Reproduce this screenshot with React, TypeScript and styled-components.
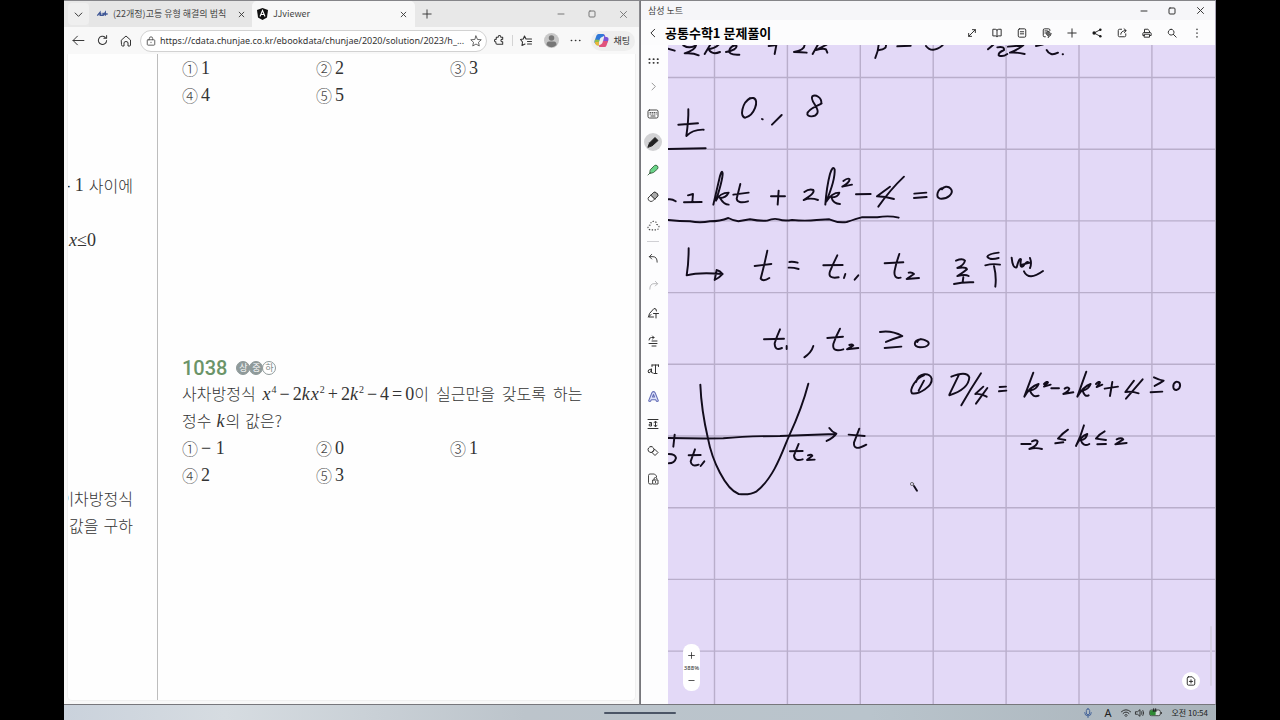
import React from 'react';
import styled, { createGlobalStyle } from 'styled-components';

const UI = `"Noto Sans", "Noto Sans CJK KR", sans-serif`;
const KR = `"Noto Sans CJK KR", sans-serif`;
const BOOK = `"Liberation Serif", "Noto Sans CJK KR", serif`;

const GlobalStyle = createGlobalStyle`
  * { box-sizing: border-box; }
  body { margin: 0; background: #000; font-family: ${UI}; color: #222; }
  button { border: 0; padding: 0; margin: 0; background: none; color: inherit; font: inherit; cursor: pointer; }
`;

const Screen = styled.div`
  min-height: 100vh;
  margin: 0 5%;
  display: flex;
  flex-direction: column;
  overflow: hidden;
`;

const Desktop = styled.main`
  flex: 1;
  display: grid;
  grid-template-columns: minmax(0, 1fr) minmax(0, 1fr);
`;

const Window = styled.section<{ $bg: string }>`
  display: flex;
  flex-direction: column;
  min-width: 0;
  background: ${(p) => p.$bg};
  border-top: 1px solid #858589;
  border-bottom: 1px solid #77777c;
`;

const BrowserWindow = styled(Window)`
  border-right: 1px solid #8a8a8e;
`;

const NotesWindow = styled(Window)`
  border-left: 1px solid #77777c;
  border-right: 1px solid #aaa5b5;
`;

/* ---------- icons ---------- */

const Svg = styled.svg`
  display: block;
  flex: none;
  overflow: visible;
`;

type IconProps = { d: string; size?: number; width?: number; fill?: string; color?: string; children?: React.ReactNode };

const Icon = ({ d, size = 12, width = 2, fill = 'none', color = 'currentColor', children }: IconProps) => (
  <Svg width={size} height={size} viewBox="0 0 24 24" fill={fill} stroke={color} strokeWidth={width} strokeLinecap="round" strokeLinejoin="round" aria-hidden="true">
    <path d={d} />
    {children}
  </Svg>
);

const CROSS = 'M4 4 L20 20 M20 4 L4 20';
const PLUS = 'M12 2 V22 M2 12 H22';
const MINUS = 'M3 12 H21';
const SQUARE = 'M6 3 H18 Q21 3 21 6 V18 Q21 21 18 21 H6 Q3 21 3 18 V6 Q3 3 6 3 Z';

/* ---------- browser ---------- */

const TabBar = styled.header`
  display: flex;
  align-items: center;
  height: 26px;
  background: #e8e8e8;
  padding: 0 6px 0 4px;
`;

const IconButton = styled.button<{ $w?: number; $h?: number; $bg?: string; $color?: string }>`
  display: flex;
  align-items: center;
  justify-content: center;
  flex: none;
  width: ${(p) => p.$w ?? 24}px;
  height: ${(p) => p.$h ?? 22}px;
  background: ${(p) => p.$bg ?? 'transparent'};
  color: ${(p) => p.$color ?? '#333'};
  border-radius: 4px;
`;

const Tab = styled.div<{ $active?: boolean }>`
  display: flex;
  align-items: center;
  gap: 5px;
  flex: 0 1 163px;
  min-width: 0;
  height: 26px;
  padding: 0 0 0 ${(p) => (p.$active ? 5 : 8)}px;
  border-radius: 5px 5px 0 0;
  background: ${(p) => (p.$active ? '#f8f8f8' : '#e6e6e6')};
  font-family: ${KR};
  font-size: 9px;
  line-height: 14px;
  color: #444;
`;

const TabTitle = styled.span`
  flex: 1;
  white-space: nowrap;
  overflow: hidden;
`;

const Spacer = styled.div`
  flex: 1;
`;

const WindowButtons = styled.div<{ $h: number; $gap: number; $color: string }>`
  display: flex;
  align-items: center;
  gap: ${(p) => p.$gap}px;
  height: ${(p) => p.$h}px;
  color: ${(p) => p.$color};
`;

const Toolbar = styled.nav`
  display: flex;
  align-items: center;
  height: 27px;
  padding: 0 4px 0 2px;
  background: #f8f8f8;
  color: #333;
`;

const AddressBar = styled.label`
  display: flex;
  align-items: center;
  flex: 1;
  min-width: 0;
  height: 22px;
  margin-left: 2px;
  padding: 0 4px 0 5px;
  border: 1px solid #d2d2d2;
  border-radius: 11px;
  background: #fff;
`;

const Address = styled.input`
  flex: 1;
  min-width: 0;
  margin-left: 4px;
  border: 0;
  padding: 0;
  outline: 0;
  background: none;
  font-family: "Noto Sans", sans-serif;
  font-size: 9px;
  line-height: 16px;
  color: #333;
`;

const Divider = styled.span`
  width: 1px;
  height: 11px;
  background: #d4d4d4;
`;

const CopilotButton = styled.button`
  display: flex;
  align-items: center;
  gap: 4px;
  height: 20px;
  padding: 0 5px 0 3px;
  margin-left: 4px;
  border-radius: 10px;
  background: #eee;
  font-family: ${KR};
  font-size: 9px;
  line-height: 14px;
`;

const BookPage = styled.div`
  flex: 1;
  display: grid;
  grid-template-columns: 90px minmax(0, 1fr);
  margin: 0 3px 3px;
  border: 1px solid #f0f0f0;
  border-top: 0;
  border-radius: 0 0 5px 5px;
  background: #fefefe;
  font-family: ${BOOK};
  font-size: 16px;
  line-height: 27px;
  color: #333;
`;

const SideColumn = styled.aside`
  display: flex;
  flex-direction: column;
  padding: 118px 24px 0 0;
  border-right: 1px solid #bdbdbd;
  overflow: hidden;
`;

const SideLine = styled.p<{ $before?: number; $inset?: number }>`
  display: flex;
  justify-content: flex-end;
  gap: 5px;
  margin: ${(p) => p.$before ?? 0}px 0 0;
  padding-right: ${(p) => p.$inset ?? 0}px;
  height: 27px;
  overflow: hidden;
  white-space: nowrap;
  font-weight: 300;
`;

const MainColumn = styled.article`
  padding-left: 24px;
  min-width: 0;
`;

const Choices = styled.ol`
  display: grid;
  grid-template-columns: repeat(3, 134px);
  margin: 0;
  padding: 1px 0 0;
  list-style: none;
`;

const Choice = styled.li`
  display: flex;
  align-items: center;
  gap: 3px;
  height: 27px;
`;

const Mark = styled.span`
  font-family: ${KR};
  font-size: 16px;
  font-weight: 300;
  color: #444;
`;

const Num = styled.span`
  font-size: 18px;
`;

const Problem = styled.section`
  margin-top: 247px;
`;

const ProblemHead = styled.header`
  display: flex;
  align-items: center;
  gap: 9px;
  height: 24px;
`;

const ProblemNumber = styled.h2`
  margin: 0;
  font-family: Roboto, sans-serif;
  font-size: 20px;
  line-height: 24px;
  font-weight: 500;
  color: #6b9468;
`;

const Levels = styled.span`
  display: flex;
`;

const Level = styled.span<{ $on?: boolean }>`
  width: 14px;
  height: 14px;
  margin-right: -1px;
  border: 1px solid #8f9a9a;
  border-radius: 50%;
  background: ${(p) => (p.$on ? '#8f9a9a' : '#fff')};
  color: ${(p) => (p.$on ? '#fff' : '#7d8888')};
  font-family: ${KR};
  font-size: 9px;
  line-height: 12px;
  text-align: center;
`;

const Sentence = styled.p<{ $gap: number }>`
  display: flex;
  align-items: baseline;
  gap: ${(p) => p.$gap}px;
  height: 27px;
  margin: 0;
  white-space: nowrap;
`;

const Word = styled.span`
  font-family: ${KR};
  font-size: 16px;
  font-weight: 300;
`;

const Formula = styled.span`
  font-size: 18px;
  & i { padding-right: 1px; }
  & sup { font-size: 10px; line-height: 0; vertical-align: 7px; }
`;

const Op = styled.span`
  padding: 0 3px;
`;

/* ---------- notes ---------- */

const NotesTitle = styled.header`
  display: flex;
  align-items: center;
  justify-content: space-between;
  height: 19px;
  padding: 0 5px 0 7px;
  background: #f6f6f9;
  font-family: ${KR};
  font-size: 9px;
  line-height: 14px;
  color: #444;
`;

const NotesBar = styled.nav`
  display: flex;
  align-items: center;
  height: 25px;
  padding-right: 6px;
  background: #fcfcfd;
  color: #1a1a1a;
`;

const NoteName = styled.h1`
  flex: 1;
  margin: 0 0 0 1px;
  font-family: ${KR};
  font-size: 13px;
  line-height: 20px;
  font-weight: 700;
  white-space: nowrap;
  color: #000;
`;

const NotesBody = styled.div`
  flex: 1;
  display: flex;
  min-height: 0;
`;

const ToolRail = styled.aside`
  display: flex;
  flex-direction: column;
  align-items: center;
  width: 27px;
  padding: 6px 3px 0 0;
  background: #fdfdfe;
  color: #333;
`;

const ToolGroup = styled.div<{ $h: number }>`
  display: flex;
  flex-direction: column;
  justify-content: space-between;
  height: ${(p) => p.$h}px;
`;

const RailGap = styled.div`
  height: 10px;
`;

const ToolButton = styled.button<{ $active?: boolean }>`
  display: flex;
  align-items: center;
  justify-content: center;
  width: 18px;
  height: 18px;
  border-radius: 50%;
  background: ${(p) => (p.$active ? '#d2d2d4' : 'transparent')};
`;

const RailRule = styled.hr`
  width: 12px;
  height: 1px;
  margin: 7px 0;
  border: 0;
  background: #d0d0d4;
`;

const Canvas = styled.div`
  position: relative;
  flex: 1;
  min-width: 0;
  overflow: hidden;
  background: #e3d9f7;
`;

const Sheet = styled.svg`
  display: block;
  width: 100%;
  height: 100%;
`;

const ZoomControl = styled.div`
  position: absolute;
  left: 15px;
  bottom: 13px;
  display: flex;
  flex-direction: column;
  align-items: center;
  justify-content: space-between;
  width: 17px;
  height: 47px;
  padding: 7px 0;
  border-radius: 8px;
  background: #fff;
  font-size: 6px;
  line-height: 8px;
  color: #222;
`;

const ZoomButton = styled.button`
  display: flex;
  align-items: center;
  justify-content: center;
  width: 12px;
  height: 8px;
`;

const AddPage = styled.button`
  position: absolute;
  right: 15px;
  bottom: 14px;
  display: flex;
  align-items: center;
  justify-content: center;
  width: 18px;
  height: 18px;
  border-radius: 50%;
  background: #fff;
`;

const ScrollThumb = styled.span`
  position: absolute;
  right: 3px;
  bottom: 18px;
  width: 2px;
  height: 60px;
  border-radius: 1px;
  background: #d6cfe4;
`;

/* ---------- taskbar ---------- */

const Taskbar = styled.footer`
  display: grid;
  grid-template-columns: 1fr 72px 1fr;
  align-items: center;
  height: 15px;
  padding-right: 8px;
  padding-left: 8px;
  background: linear-gradient(90deg, #cad2dc 0%, #d6dce1 14%, #bcc4cb 40%, #b9c4cc 70%, #a9b3ba 100%);
`;

const HomeHandle = styled.span`
  grid-column: 2;
  height: 2px;
  border-radius: 1px;
  background: #4b5566;
`;

const Tray = styled.div`
  display: flex;
  align-items: center;
  justify-content: flex-end;
  gap: 4px;
  font-family: ${KR};
  font-size: 8px;
  line-height: 12px;
  color: #222;
`;

const Clock = styled.time`
  margin-left: 6px;
  white-space: nowrap;
`;

const InputMode = styled.span`
  margin: 0 5px 0 7px;
  font-family: "Noto Sans", sans-serif;
  font-size: 11px;
`;

type Ink = { x: number; y: number; strokes: string[] };

const ink: Ink[] = [
  {
    x: 640, y: 0,
    strokes: [
      'M84 146 L104 152',
      'M130 136 Q148 148 168 136 Q166 150 134 160 Q160 158 176 166',
      'M212 132 L194 162 M236 134 Q224 146 206 148 Q216 166 240 156',
      'M258 156 Q290 150 290 138 Q280 132 270 146 Q260 166 298 164',
      'M410 130 L404 162 M386 138 L404 136',
      'M494 134 Q494 150 462 156 Q484 156 500 158',
      'M536 130 L518 162 M560 134 L528 150 Q550 144 558 148 L562 158',
      'M716 132 Q716 150 706 174 M738 134 Q740 148 718 150',
      'M772 139 L812 137',
      'M858 138 Q876 162 908 136',
    ],
  },
  {
    x: 930, y: 0,
    strokes: [
      'M190 134 L174 148',
      'M202 142 Q224 138 222 150 Q204 158 206 166 Q218 172 232 162',
      'M234 140 L280 136 Q262 150 240 158 Q258 156 284 162',
      'M318 138 L338 134 M350 150 Q360 170 384 158 M398 163 L399 163',
    ],
  },
  {
    x: 660, y: 80,
    strokes: [
      'M85 88 Q86 120 79 168 Q98 148 131 149 M55 134 L114 130',
      'M25 207 L137 205',
      'M270 54 C246 68 238 112 256 113 C282 108 300 60 280 54 Q268 52 258 66',
      'M306 117 L308 118 M365 105 L336 134',
      'M484 70 C486 52 466 42 457 49 C448 62 480 84 472 100 C464 114 440 110 442 101 C444 86 472 78 485 70',
      'M25 358 Q36 356 47 364 M84 346 L99 342 L97 366 M72 367 L125 366',
      'M160 374 L180 288 Q186 268 188 280 Q188 300 168 362 Q180 338 206 338 Q198 354 180 354 Q192 374 206 374',
      'M241 312 L230 356 Q232 372 264 364 M220 344 L266 338',
      'M333 349 L375 349 M356 332 L353 374',
      'M433 336 Q448 325 460 330 Q466 340 431 360 Q452 352 474 360',
      'M496 374 Q500 320 510 282 Q518 256 524 268 Q526 300 498 366 Q515 338 538 338 Q534 352 514 352 Q520 372 540 372',
      'M550 303 Q564 292 569 298 Q568 308 547 320 L576 314',
      'M588 343 L632 342',
      'M690 320 L651 349 Q676 350 702 357 M732 290 Q690 330 655 380',
      'M763 341 L799 338 M762 354 L800 351',
      'M850 324 C832 326 826 352 840 356 C862 358 884 340 872 326 C864 316 850 320 846 328',
      'M25 420 Q60 424 90 424 Q120 430 150 424 Q180 424 205 414 Q220 422 235 424 L270 418 Q300 424 322 422 Q340 414 356 418 Q372 424 396 420 Q436 424 470 420 L508 418 Q536 430 560 426 Q590 416 605 412 L652 412 Q686 406 716 413',
      'M86 505 Q86 550 80 586 Q116 576 188 582 M170 570 L164 600 Q178 594 188 582 Q180 572 170 570',
      'M322 512 Q312 560 302 596 Q310 606 328 594 M284 558 L334 552',
      'M388 546 Q398 544 413 548 M386 563 Q398 562 416 567',
      'M532 526 Q520 550 510 574 Q502 598 536 592 M490 556 L548 555',
      'M556 582 L552 594 M595 586 L584 599',
      'M718 522 Q708 550 704 572 Q700 598 722 593 M674 550 L730 547',
      'M746 578 Q756 576 762 582 L740 597 L777 594',
    ],
  },
  {
    x: 850, y: 230,
    strokes: [
      'M318 92 Q338 84 345 92 Q342 106 322 114 Q348 110 351 118 Q340 128 322 138 Q346 132 356 138 M340 142 L338 156 M312 162 Q336 156 370 157',
      'M446 68 Q414 72 412 80 Q420 92 446 84 M406 106 Q428 100 450 104 M432 108 Q440 140 436 170',
      'M485 83 Q488 116 500 112 Q508 82 513 88 Q508 118 520 108 Q530 92 536 98 M540 84 Q546 100 540 114 M516 104 L540 98 M522 124 Q536 154 579 123',
      'M90 306 Q124 300 157 318 Q130 326 108 336 M104 354 L154 350',
      'M212 328 C190 332 188 350 210 352 C236 352 244 338 228 332 C214 324 204 328 202 336',
      'M222 436 C196 444 178 480 186 490 C206 494 248 470 245 446 C240 426 206 428 198 456 M222 452 L206 482',
      'M326 436 L298 494 M304 440 Q350 422 358 442 Q356 478 298 496',
      'M393 430 Q360 480 334 526',
      'M400 470 L376 492 Q394 490 410 500 M412 474 L378 521',
      'M449 471 L468 470 M447 484 L469 482',
      'M550 428 L523 500 Q540 470 566 462 Q560 478 540 482 Q548 504 566 497',
      'M582 462 Q592 452 594 458 L582 470 L602 464 M604 475 L627 475',
      'M644 476 Q654 469 658 476 Q655 486 640 492 L670 487',
      'M709 425 L682 500 Q700 470 722 462 Q716 478 698 482 Q704 502 716 496',
      'M738 462 Q748 452 750 458 L740 471 L757 464',
      'M764 476 L804 470 M787 456 L780 498',
      'M852 452 L826 486 Q848 484 866 490 M878 448 L828 506',
      'M912 442 Q928 450 941 452 Q930 460 914 468 M902 487 L937 485',
      'M978 456 C966 462 968 482 980 480 C994 474 994 456 980 455',
      'M514 642 L542 642 M546 634 Q560 628 563 634 Q562 648 538 657 Q558 652 576 657',
      'M654 599 Q640 608 624 626 L646 630 M616 640 L640 637',
      'M702 586 Q692 620 678 648 Q690 620 712 612 Q708 630 692 630 Q700 652 718 642',
      'M764 604 Q748 612 738 626 L768 630 M742 643 L768 642',
      'M800 628 Q814 622 820 628 L796 643 L830 639',
    ],
  },
  {
    x: 660, y: 320,
    strokes: [
      'M360 28 Q350 50 344 70 Q344 94 366 84 M312 58 L372 56 M380 78 L380 87',
      'M460 78 Q454 98 433 112',
      'M540 26 Q528 48 520 72 Q516 98 550 88 M502 54 L549 50',
      'M568 75 Q576 72 580 76 L561 88 L595 84',
      'M121 194 Q124 270 144 356 C156 420 196 508 236 522 Q270 526 290 514 C346 470 372 380 388 346 Q426 264 445 191',
      'M25 354 Q100 356 190 355 Q260 348 360 348 L526 342 M508 324 Q516 336 529 341 Q520 354 500 363',
      'M44 344 L40 380 M26 402 Q46 402 48 414 Q44 430 26 430',
      'M105 388 L92 424 Q94 442 116 434 M86 406 L122 405 M133 424 L122 438',
      'M416 372 L402 406 Q404 426 428 418 M390 394 L428 393 M444 406 Q454 402 457 407 L441 420 L464 419',
      'M598 326 L582 368 Q580 396 619 374 M566 344 L614 348',
      'M762 498 L771 512',
    ],
  },
];

const gridX = [-1, 0, 1, 2, 3, 4, 5, 6, 7, 8, 9, 10, 11, 12, 13, 14];
const gridY = [0, 1, 2, 3, 4, 5, 6, 7, 8, 9, 10, 11, 12, 13, 14];

const NoteSheet = () => (
  <Sheet viewBox="668 45 548 659" preserveAspectRatio="xMinYMin slice" role="img" aria-label="공통수학1 문제풀이 필기">
    <g stroke="#b9aecb" strokeWidth="1.4">
      {gridX.map((i) => <line key={i} x1={714.5 + i * 72.9} x2={714.5 + i * 72.9} y1="45" y2="1200" />)}
      {gridY.map((i) => <line key={i} x1="668" x2="1900" y1={77.5 + i * 71.7} y2={77.5 + i * 71.7} />)}
    </g>
    <g fill="none" stroke="#120c1c" strokeLinecap="round" strokeLinejoin="round">
      {ink.map((part) => (
        <g key={`${part.x}-${part.y}`} transform={`translate(${part.x} ${part.y}) scale(0.3333)`} strokeWidth="5.8">
          {part.strokes.map((d) => <path key={d} d={d} />)}
        </g>
      ))}
      <circle cx="912" cy="484" r="1.6" stroke="#555" strokeWidth="0.8" />
    </g>
  </Sheet>
);

const noteActions: { label: string; d: string; width?: number; extra?: React.ReactNode }[] = [
  { label: '전체 화면', d: 'M4 20 L20 4 M13 4 H20 V11 M4 13 V20 H11' },
  { label: '읽기 모드', d: 'M12 5 V21 M12 5 Q11 3 8 3 H2 V19 H9 Q12 19 12 21 Q12 19 15 19 H22 V3 H16 Q13 3 12 5' },
  { label: '페이지', d: 'M6 2 H18 Q21 2 21 5 V19 Q21 22 18 22 H6 Q3 22 3 19 V5 Q3 2 6 2 Z M8 9 H16 M8 14 H16' },
  { label: '녹음', d: 'M8 21 H5 Q3 21 3 18 V5 Q3 2 6 2 H16 Q19 2 19 5 V6 M7 7 H13 M7 12 H9 M15 8 Q19 8 19 12 V14 Q19 18 15 18 Q11 18 11 14 V12 Q11 8 15 8 M22 13 Q22 20 15 21 V23', extra: <rect x="12" y="9" width="6" height="8" fill="#666" stroke="none" /> },
  { label: '추가', d: PLUS },
  { label: '공유', d: 'M20 4 L5 12 L20 20', extra: <g fill="#1a1a1a" stroke="none"><circle cx="5" cy="12" r="4" /><circle cx="20" cy="4" r="3" /><circle cx="20" cy="20" r="3" /></g> },
  { label: '내보내기', d: 'M11 3 H6 Q3 3 3 6 V18 Q3 21 6 21 H18 Q21 21 21 18 V14 M9 15 Q9 7 21 6 M17 2 L22 6 L18 11' },
  { label: '인쇄', d: 'M6 11 V3 H14 L18 7 V11 M6 18 H2 V13 Q2 11 5 11 H19 Q22 11 22 13 V18 H18 M6 15 H18 V22 H6 Z' },
  { label: '검색', d: 'M10 3 A7 7 0 1 1 9.9 3 M15 15 L22 22' },
  { label: '더보기', width: 3.4, d: 'M12 3 V3.5 M12 12 V12.5 M12 21 V21.5' },
];

const penTools: { label: string; icon: React.ReactNode; active?: boolean }[] = [
  { label: '키보드', icon: <Icon width={1.8} d="M5 4 H19 Q22 4 22 7 V17 Q22 20 19 20 H5 Q2 20 2 17 V7 Q2 4 5 4 Z M6 9 H7 M10 9 H11 M14 9 H15 M18 9 H18.5 M6 12 H7 M10 12 H11 M14 12 H15 M18 12 H18.5 M8 16 H16" /> },
  { label: '펜', active: true, icon: <Icon d="M2 22 L5 14 L16 3 L22 9 L11 19 Z M5 14 L10 19" fill="#222" color="#222" /> },
  { label: '형광펜', icon: <Icon width={1.8} d="M2 22 L7 17 M7 11 L15 3 Q18 1 21 4 Q23 7 21 10 L13 17 L6 19 Z" fill="#69d488" color="#37613f" /> },
  { label: '지우개', icon: <Icon width={1.8} d="M3 13 L13 3 Q16 1 19 4 L21 6 Q23 9 20 12 L11 20 Q8 22 5 20 L3 18 Q1 15 3 13 Z M8 8 L16 16"><path d="M8 8 L13 3 Q16 1 19 4 L21 6 Q23 9 20 12 L16 16 Z" fill="#aaa" /></Icon> },
  { label: '선택', icon: <Svg width="13" height="13" viewBox="0 0 24 24" fill="none" stroke="#444" strokeWidth="2" strokeDasharray="2.5 2.8" aria-hidden="true"><path d="M6 20 Q1 19 2 14 Q3 11 6 11 Q7 4 13 4 Q18 5 18 10 Q23 11 22 16 Q21 20 17 20 Z" /></Svg> },
];

const editTools: { label: string; icon: React.ReactNode }[] = [
  { label: '실행 취소', icon: <Icon size={11} d="M8 3 L3 8 L8 13 M3 8 H11 Q20 8 20 20" /> },
  { label: '다시 실행', icon: <Icon size={11} color="#b5b5b8" d="M16 3 L21 8 L16 13 M21 8 H13 Q4 8 4 20" /> },
  { label: '필기 변환', icon: <Icon d="M13 20 H3 L5 13 L14 3 Q19 2 19 8 M3 20 L8 15 M13 13 H23 M18 13 V22" /> },
  { label: '정렬', icon: <Icon d="M4 10 Q4 5 9 5 H14 M11 2 L14 5 L11 8 M10 12 H20 M4 17 H20 M10 22 H18" /> },
  { label: '텍스트 변환', icon: <Icon d="M10 4 H23 M17 4 V21 M10 4 V7 M23 4 V7 M14 21 H20 M9 12 L3 14 Q1 19 4 20 Q8 19 9 12 V19 L12 20" /> },
  { label: '스타일', icon: <Icon size={13} d="M3 20 L9 5 Q12 1 15 5 L21 20 Q18 23 16 18 H8 Q6 23 3 20 M10 13 H14 L12 8 Z" fill="#dfe3fb" color="#6670b8" /> },
  { label: '줄 간격', icon: <Icon d="M2 3 H22 M2 21 H22 M5 9 H9 V16 H5 Q3 14 5 12 H9 M17 7 V17 M14 9 L17 7 L20 9 M14 15 L17 17 L20 15" /> },
  { label: '도형', icon: <Icon d="M8 3 A6 6 0 1 0 8.1 3 M16 9 L22 15 L16 21 L10 15 Z" /> },
  { label: '페이지 잠금', icon: <Icon width={1.8} d="M9 22 H6 Q3 22 3 19 V5 Q3 2 6 2 H15 L19 6 V8 M12 14 H22 V22 H12 Z M14 14 V12 Q14 9 17 9 Q20 9 20 12 M17 17 V19" /> },
];

const choicesTop = [['①', '1'], ['②', '2'], ['③', '3'], ['④', '4'], ['⑤', '5']];
const choicesMain = [['①', '− 1'], ['②', '0'], ['③', '1'], ['④', '2'], ['⑤', '3']];

const ChoiceList = ({ items }: { items: string[][] }) => (
  <Choices>
    {items.map(([mark, value]) => (
      <Choice key={mark}><Mark>{mark}</Mark><Num>{value}</Num></Choice>
    ))}
  </Choices>
);

const Controls = ({ height, gap, color }: { height: number; gap: number; color: string }) => (
  <WindowButtons $h={height} $gap={gap} $color={color}>
    <IconButton $w={20} $h={16} $color={color} aria-label="최소화"><Icon size={8} width={3} d={MINUS} /></IconButton>
    <IconButton $w={20} $h={16} $color={color} aria-label="최대화"><Icon size={8} width={3} d={SQUARE} /></IconButton>
    <IconButton $w={20} $h={16} $color={color} aria-label="닫기"><Icon size={9} width={2.6} d={CROSS} /></IconButton>
  </WindowButtons>
);

const Browser = () => (
  <BrowserWindow $bg="#f8f8f8">
    <TabBar>
      <IconButton $w={21} $bg="#efefef" aria-label="탭 목록"><Icon size={9} width={2.6} d="M3 8 L12 17 L21 8" /></IconButton>
      <Tab>
        <Svg width="11" height="8" viewBox="0 0 33 24" fill="none" stroke="#3f5796" strokeWidth="4" aria-hidden="true">
          <path d="M1 17 L9 7 V17 M11 8 V16 H18 V8 M18 17 L25 7 V17 M26 12 H32" />
        </Svg>
        <TabTitle>(22개정)고등 유형 해결의 법칙</TabTitle>
        <IconButton $w={21} aria-label="탭 닫기"><Icon size={7} width={3} d={CROSS} /></IconButton>
      </Tab>
      <Tab $active>
        <Svg width="11" height="12" viewBox="0 0 22 24" aria-hidden="true">
          <path d="M11 0 L22 4 L20 19 L11 24 L2 19 L0 4 Z" fill="#111" />
          <path d="M6 17 L11 5 L16 17 M8 13 H14" fill="none" stroke="#fff" strokeWidth="2.2" />
        </Svg>
        <TabTitle>JJviewer</TabTitle>
        <IconButton $w={24} aria-label="탭 닫기"><Icon size={7} width={3} d={CROSS} /></IconButton>
      </Tab>
      <IconButton aria-label="새 탭"><Icon size={10} width={2.2} d={PLUS} /></IconButton>
      <Spacer />
      <Controls height={26} gap={11} color="#777" />
    </TabBar>
    <Toolbar>
      <IconButton aria-label="뒤로"><Icon size={13} width={1.8} d="M22 12 H2 M10 4 L2 12 L10 20" /></IconButton>
      <IconButton aria-label="새로 고침"><Icon size={11} width={2.2} d="M21 12 A9 9 0 1 1 18 5 M21 1 V7 H15" /></IconButton>
      <IconButton aria-label="홈"><Icon size={12} width={2} d="M3 10 L12 2 L21 10 V20 Q21 22 19 22 H16 V16 Q16 13 12 13 Q8 13 8 16 V22 H5 Q3 22 3 20 Z" /></IconButton>
      <AddressBar>
        <Icon size={10} width={2.2} d="M5 9 H19 Q21 9 21 11 V20 Q21 22 19 22 H5 Q3 22 3 20 V11 Q3 9 5 9 Z M8 9 V6 Q8 2 12 2 Q16 2 16 6 V9 M12 15 V16" color="#555" />
        <Address aria-label="주소" readOnly value="https://cdata.chunjae.co.kr/ebookdata/chunjae/2020/solution/2023/h_..." />
        <Icon size={12} width={1.8} color="#555" d="M12 2 L15 9 L22.5 9.5 L17 14.5 L18.5 22 L12 18 L5.5 22 L7 14.5 L1.5 9.5 L9 9 Z" />
      </AddressBar>
      <IconButton $w={25} aria-label="확장"><Icon size={11} width={2.2} d="M5 5 H9 Q9 1 12 1 Q15 1 15 5 H19 V9 Q15 9 15 12 Q15 15 19 15 V20 H7 Q4 20 4 17 V15 Q1 15 1 12 Q1 9 5 9 Z" /></IconButton>
      <Divider />
      <IconButton $w={26} aria-label="즐겨찾기"><Icon size={12} width={2.2} d="M15 8 H12 L9 2 L6.5 8 L1 9 L5 14 L4 21 L10 18 M14 8 H23 M15 13 H23 M15 18 H23" /></IconButton>
      <IconButton $w={24} aria-label="프로필">
        <Svg width="15" height="15" viewBox="0 0 30 30" aria-hidden="true">
          <circle cx="15" cy="15" r="15" fill="#c8c8c8" />
          <circle cx="15" cy="10" r="5.5" fill="#777" />
          <path d="M5 24 Q5 17 10 17 H20 Q25 17 25 24 Q15 33 5 24 Z" fill="#777" />
        </Svg>
      </IconButton>
      <IconButton $w={24} aria-label="설정 및 기타"><Icon size={11} width={3.4} d="M3 12 H3.5 M12 12 H12.5 M21 12 H21.5" /></IconButton>
      <CopilotButton>
        <Svg width="15" height="15" viewBox="0 0 30 30" aria-hidden="true">
          <path d="M9 2 H19 Q21 3 20 6 L14 9 Q12 10 11 14 L9 21 H3 Q0 20 1 16 L5 5 Q6 2 9 2 Z" fill="#2f78d8" />
          <path d="M2 13 L11 14 L9 21 Q8 24 12 25 Q5 26 3 22 Q0 19 2 13 Z" fill="#8fbf4e" />
          <path d="M2 18 L10 18 L9 22 Q10 25 13 25 H8 Q3 25 2 18 Z" fill="#efb43a" />
          <path d="M19 2 Q22 3 23 8 H26 Q30 9 29 14 L27 19 L18 17 L20 9 Q21 6 19 2 Z" fill="#7a55d6" />
          <path d="M28 16 L25 25 Q24 28 21 28 H12 Q9 28 10 25 L15 22 Q17 21 18 16 Z" fill="#e0527c" />
        </Svg>
        채팅
      </CopilotButton>
    </Toolbar>
    <BookPage>
      <SideColumn>
        <SideLine><Num>- 1</Num><Word>사이에</Word></SideLine>
        <SideLine $before={28} $inset={37}><Num><i>x</i>≤0</Num></SideLine>
        <SideLine $before={231}><Word>이차방정식</Word></SideLine>
        <SideLine><Word>값을</Word><Word>구하</Word></SideLine>
      </SideColumn>
      <MainColumn>
        <ChoiceList items={choicesTop} />
        <Problem>
          <ProblemHead>
            <ProblemNumber>1038</ProblemNumber>
            <Levels><Level $on>상</Level><Level $on>중</Level><Level>하</Level></Levels>
          </ProblemHead>
          <Sentence $gap={7}>
            <Word>사차방정식</Word>
            <span>
              <Formula>
                <i>x</i><sup>4</sup><Op>−</Op>2<i>k</i><i>x</i><sup>2</sup><Op>+</Op>2<i>k</i><sup>2</sup><Op>−</Op>4<Op>=</Op>0
              </Formula>
              <Word>이</Word>
            </span>
            <Word>실근만을</Word>
            <Word>갖도록</Word>
            <Word>하는</Word>
          </Sentence>
          <Sentence $gap={5}>
            <Word>정수</Word>
            <span><Formula><i>k</i></Formula><Word>의</Word></span>
            <Word>값은?</Word>
          </Sentence>
          <ChoiceList items={choicesMain} />
        </Problem>
      </MainColumn>
    </BookPage>
  </BrowserWindow>
);

const Notes = () => (
  <NotesWindow $bg="#fdfdfe">
    <NotesTitle>
      <span>삼성 노트</span>
      <Controls height={19} gap={8} color="#333" />
    </NotesTitle>
    <NotesBar>
      <IconButton $w={23} aria-label="뒤로"><Icon size={10} width={2.4} d="M16 3 L7 12 L16 21" /></IconButton>
      <NoteName>공통수학1 문제풀이</NoteName>
      {noteActions.map((a) => (
        <IconButton key={a.label} $w={25} aria-label={a.label}><Icon size={10} width={a.width ?? 2.4} d={a.d}>{a.extra}</Icon></IconButton>
      ))}
    </NotesBar>
    <NotesBody>
      <ToolRail>
        <ToolGroup $h={44}>
          <ToolButton aria-label="이동"><Icon size={11} width={4} d="M3 9 H3.5 M12 9 H12.5 M21 9 H21.5 M3 17 H3.5 M12 17 H12.5 M21 17 H21.5" /></ToolButton>
          <ToolButton aria-label="펼치기"><Icon size={9} color="#777" d="M8 3 L17 12 L8 21" /></ToolButton>
        </ToolGroup>
        <RailGap />
        <ToolGroup $h={129}>
          {penTools.map((t) => <ToolButton key={t.label} $active={t.active} aria-label={t.label}>{t.icon}</ToolButton>)}
        </ToolGroup>
        <RailRule />
        <ToolGroup $h={239}>
          {editTools.map((t) => <ToolButton key={t.label} aria-label={t.label}>{t.icon}</ToolButton>)}
        </ToolGroup>
      </ToolRail>
      <Canvas>
        <NoteSheet />
        <ZoomControl>
          <ZoomButton aria-label="확대"><Icon size={7} width={2.6} d={PLUS} /></ZoomButton>
          <span>388%</span>
          <ZoomButton aria-label="축소"><Icon size={7} width={2.6} d={MINUS} /></ZoomButton>
        </ZoomControl>
        <ScrollThumb />
        <AddPage aria-label="페이지 추가"><Icon size={10} width={2.2} d="M6 2 H15 L21 8 V19 Q21 22 18 22 H6 Q3 22 3 19 V5 Q3 2 6 2 Z M12 9 V17 M8 13 H16" /></AddPage>
      </Canvas>
    </NotesBody>
  </NotesWindow>
);

export default function App() {
  return (
    <>
      <GlobalStyle />
      <Screen>
        <Desktop>
          <Browser />
          <Notes />
        </Desktop>
        <Taskbar>
          <HomeHandle />
          <Tray>
            <Icon size={10} color="#3f5f97" width={2.2} d="M12 2 Q16 2 16 6 V12 Q16 16 12 16 Q8 16 8 12 V6 Q8 2 12 2 Z M4 11 Q4 19 12 19 Q20 19 20 11 M12 19 V23" />
            <InputMode>A</InputMode>
            <Icon size={10} width={2.2} d="M1 9 Q12 -1 23 9 M5 13 Q12 6 19 13 M9 17 Q12 14 15 17 M12 20 V20.5" />
            <Icon size={10} width={2} d="M2 9 H6 L12 4 V20 L6 15 H2 Z M16 9 Q18 12 16 15 M19 6 Q23 12 19 18" />
            <Svg width="13" height="9" viewBox="0 0 39 27" aria-hidden="true">
              <rect x="2" y="6" width="32" height="17" rx="5" fill="#d7dcdc" stroke="#333" strokeWidth="2.5" />
              <rect x="3" y="7" width="17" height="15" rx="3" fill="#2f8a34" />
              <path d="M37 12 V18" stroke="#333" strokeWidth="3" />
              <path d="M14 1 V10 M20 1 V10 M11 9 H23" stroke="#222" strokeWidth="3" />
            </Svg>
            <Clock>오전 10:54</Clock>
          </Tray>
        </Taskbar>
      </Screen>
    </>
  );
}
